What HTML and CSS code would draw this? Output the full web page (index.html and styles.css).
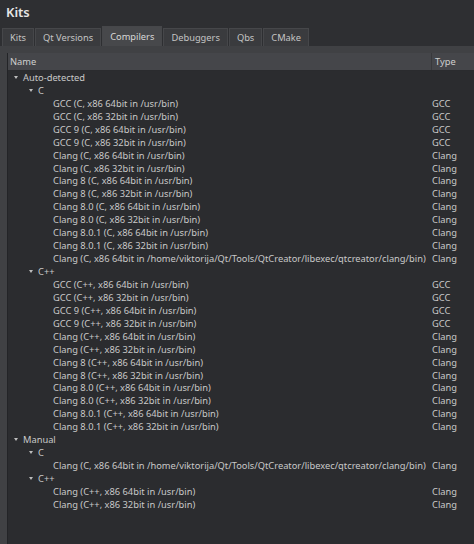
FILE: index.html
```html
<!DOCTYPE html>
<html>
<head>
<meta charset="utf-8">
<link rel="stylesheet" href="styles.css">
</head>
<body>
<div class="title">Kits</div>
<div class="tabs">
  <div class="tab">Kits</div>
  <div class="tab">Qt Versions</div>
  <div class="tab sel">Compilers</div>
  <div class="tab">Debuggers</div>
  <div class="tab">Qbs</div>
  <div class="tab">CMake</div>
</div>
<div class="pane">
  <div class="tree">
    <div class="head"><div class="hname">Name</div><div class="htype">Type</div></div>
    <div class="rows">
      <div class="row l0"><span class="arr"></span><span class="n">Auto-detected</span></div>
      <div class="row l1"><span class="arr"></span><span class="n">C</span></div>
      <div class="row l2"><span class="n">GCC (C, x86 64bit in /usr/bin)</span><span class="t">GCC</span></div>
      <div class="row l2"><span class="n">GCC (C, x86 32bit in /usr/bin)</span><span class="t">GCC</span></div>
      <div class="row l2"><span class="n">GCC 9 (C, x86 64bit in /usr/bin)</span><span class="t">GCC</span></div>
      <div class="row l2"><span class="n">GCC 9 (C, x86 32bit in /usr/bin)</span><span class="t">GCC</span></div>
      <div class="row l2"><span class="n">Clang (C, x86 64bit in /usr/bin)</span><span class="t">Clang</span></div>
      <div class="row l2"><span class="n">Clang (C, x86 32bit in /usr/bin)</span><span class="t">Clang</span></div>
      <div class="row l2"><span class="n">Clang 8 (C, x86 64bit in /usr/bin)</span><span class="t">Clang</span></div>
      <div class="row l2"><span class="n">Clang 8 (C, x86 32bit in /usr/bin)</span><span class="t">Clang</span></div>
      <div class="row l2"><span class="n">Clang 8.0 (C, x86 64bit in /usr/bin)</span><span class="t">Clang</span></div>
      <div class="row l2"><span class="n">Clang 8.0 (C, x86 32bit in /usr/bin)</span><span class="t">Clang</span></div>
      <div class="row l2"><span class="n">Clang 8.0.1 (C, x86 64bit in /usr/bin)</span><span class="t">Clang</span></div>
      <div class="row l2"><span class="n">Clang 8.0.1 (C, x86 32bit in /usr/bin)</span><span class="t">Clang</span></div>
      <div class="row l2"><span class="n">Clang (C, x86 64bit in /home/viktorija/Qt/Tools/QtCreator/libexec/qtcreator/clang/bin)</span><span class="t">Clang</span></div>
      <div class="row l1"><span class="arr"></span><span class="n">C++</span></div>
      <div class="row l2"><span class="n">GCC (C++, x86 64bit in /usr/bin)</span><span class="t">GCC</span></div>
      <div class="row l2"><span class="n">GCC (C++, x86 32bit in /usr/bin)</span><span class="t">GCC</span></div>
      <div class="row l2"><span class="n">GCC 9 (C++, x86 64bit in /usr/bin)</span><span class="t">GCC</span></div>
      <div class="row l2"><span class="n">GCC 9 (C++, x86 32bit in /usr/bin)</span><span class="t">GCC</span></div>
      <div class="row l2"><span class="n">Clang (C++, x86 64bit in /usr/bin)</span><span class="t">Clang</span></div>
      <div class="row l2"><span class="n">Clang (C++, x86 32bit in /usr/bin)</span><span class="t">Clang</span></div>
      <div class="row l2"><span class="n">Clang 8 (C++, x86 64bit in /usr/bin)</span><span class="t">Clang</span></div>
      <div class="row l2"><span class="n">Clang 8 (C++, x86 32bit in /usr/bin)</span><span class="t">Clang</span></div>
      <div class="row l2"><span class="n">Clang 8.0 (C++, x86 64bit in /usr/bin)</span><span class="t">Clang</span></div>
      <div class="row l2"><span class="n">Clang 8.0 (C++, x86 32bit in /usr/bin)</span><span class="t">Clang</span></div>
      <div class="row l2"><span class="n">Clang 8.0.1 (C++, x86 64bit in /usr/bin)</span><span class="t">Clang</span></div>
      <div class="row l2"><span class="n">Clang 8.0.1 (C++, x86 32bit in /usr/bin)</span><span class="t">Clang</span></div>
      <div class="row l0"><span class="arr"></span><span class="n">Manual</span></div>
      <div class="row l1"><span class="arr"></span><span class="n">C</span></div>
      <div class="row l2"><span class="n">Clang (C, x86 64bit in /home/viktorija/Qt/Tools/QtCreator/libexec/qtcreator/clang/bin)</span><span class="t">Clang</span></div>
      <div class="row l1"><span class="arr"></span><span class="n">C++</span></div>
      <div class="row l2"><span class="n">Clang (C++, x86 64bit in /usr/bin)</span><span class="t">Clang</span></div>
      <div class="row l2"><span class="n">Clang (C++, x86 32bit in /usr/bin)</span><span class="t">Clang</span></div>
    </div>
  </div>
</div>
</body>
</html>
```
FILE: styles.css
```css
html, body {
  margin: 0;
  padding: 0;
  background: #2e2f32;
  font-family: "Noto Sans", "Open Sans", sans-serif;
  color: #c9c9c9;
  width: 474px;
  height: 544px;
  overflow: hidden;
}
.title {
  height: 26px;
  padding-left: 6px;
  font-size: 13px;
  font-weight: 600;
  line-height: 24px;
  color: #e6e6e6;
}
.tabs {
  display: flex;
  align-items: flex-end;
  height: 20px;
  padding-left: 2px;
  gap: 1px;
}
.tab {
  height: 18px;
  line-height: 18px;
  font-size: 9.3px;
  padding: 0 7px;
  background: #3a3b3e;
  border: 1px solid #46474a;
  border-bottom: none;
  color: #c4c4c4;
  box-sizing: border-box;
}
.tab.sel {
  height: 20px;
  line-height: 19px;
  padding: 0 7px;
  background: #47484b;
  color: #d8d8d8;
}
.pane {
  background: #404144;
  padding: 7px 0 0 7px;
  height: 498px;
  box-sizing: border-box;
}
.tree {
  background: #2b2c2f;
  height: 100%;
  border-left: 1px solid #232427;
}
.head {
  display: flex;
  height: 17px;
  background: #45464a;
  border-bottom: 1px solid #2a2b2e;
  font-size: 9.3px;
  line-height: 17px;
  color: #cfcfcf;
}
.hname {
  width: 421px;
  padding-left: 2px;
  border-right: 1px solid #38393c;
}
.htype {
  padding-left: 3px;
}
.row {
  position: relative;
  height: 12.94px;
  line-height: 13px;
  font-size: 9.3px;
  white-space: nowrap;
  display: flex;
  align-items: center;
}
.row.l0 { padding-left: 4px; }
.row.l1 { padding-left: 19px; }
.row.l2 { padding-left: 45px; }
.arr {
  width: 0;
  height: 0;
  border-left: 2.5px solid transparent;
  border-right: 2.5px solid transparent;
  border-top: 3px solid #bdbdbd;
  margin-right: 5px;
  margin-left: 2px;
}
.n {
  flex: 0 0 auto;
}
.t {
  position: absolute;
  left: 424px;
}
```
